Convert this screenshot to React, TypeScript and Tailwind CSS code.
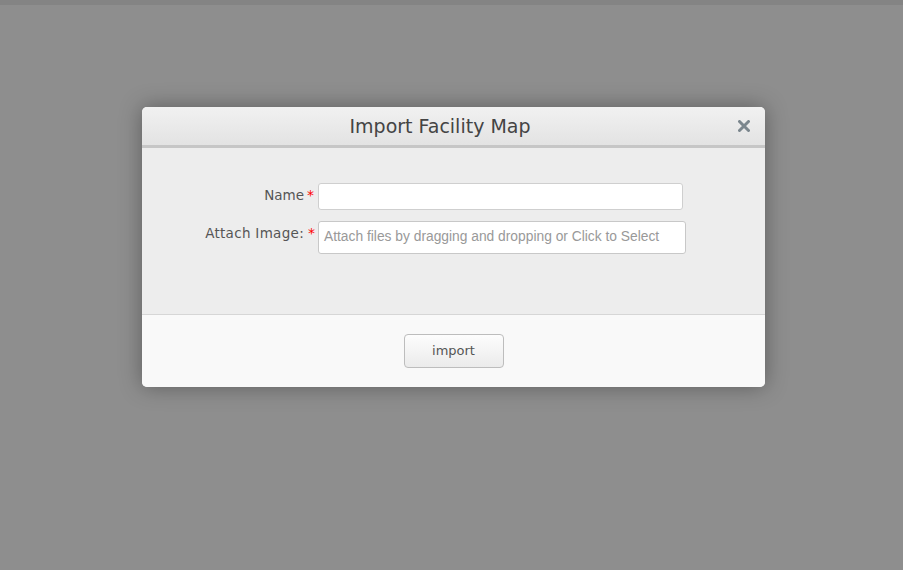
import React from 'react';

const ImportFacilityMap = () => {
  return (
    <div className="min-h-[570px] w-full bg-[#8e8e8e] font-['Liberation_Sans',Arial,sans-serif]">
      <div className="h-[5px] bg-[#848484]" />
      <div className="pl-[142px] pt-[102px]">
        <div className="w-[623px] overflow-hidden rounded-[5px] bg-[#ededed] shadow-[0_0_22px_rgba(0,0,0,0.35)]">
          {/* header */}
          <div className="relative flex h-[41px] items-center justify-center border-b-[3px] border-[#c6c6c6] bg-gradient-to-b from-[#f1f1f1] to-[#e3e3e3] pr-[27px]">
            <h2 className="font-['DejaVu_Sans',Verdana,sans-serif] text-[19px] text-[#444]">Import Facility Map</h2>
            <button className="absolute right-[15px] top-[13px] flex h-[12px] w-[12px] items-center justify-center">
              <svg width="12" height="12" viewBox="0 0 12 12">
                <path d="M1.5 1.5 L10.5 10.5 M10.5 1.5 L1.5 10.5" stroke="#7b868d" strokeWidth="3" strokeLinecap="round" />
              </svg>
            </button>
          </div>

          {/* body */}
          <div className="h-[166px] pt-[35px] font-['DejaVu_Sans',Verdana,sans-serif]">
            <div className="flex items-start">
              <label className="w-[162px] pt-[2px] text-right text-[13.5px] leading-[20px] text-[#555]">Name</label>
              <span className="w-[14px] pl-[3px] pt-[2px] text-[14px] leading-[20px] text-[#f00]">*</span>
              <input
                className="h-[27px] w-[365px] rounded-[3px] border border-[#cfcfcf] bg-white px-[6px] text-[14px] outline-none"
              />
            </div>
            <div className="mt-[11px] flex items-start">
              <label className="w-[162px] pt-[2px] text-right text-[13.5px] leading-[20px] tracking-[0.3px] text-[#555]">Attach Image:</label>
              <span className="w-[14px] pl-[4px] pt-[2px] text-[14px] leading-[20px] text-[#f00]">*</span>
              <div className="flex h-[33px] w-[368px] items-center rounded-[3px] border border-[#c8c8c8] bg-white px-[5px] font-['Liberation_Sans',Arial,sans-serif] text-[13.8px] text-[#999]">
                Attach files by dragging and dropping or Click to Select
              </div>
            </div>
          </div>

          {/* footer */}
          <div className="flex h-[73px] items-center justify-center border-t border-[#d6d6d6] bg-[#f9f9f9]">
            <button className="h-[34px] w-[100px] rounded-[4px] border border-[#bdbdbd] bg-gradient-to-b from-[#fdfdfd] to-[#ebebeb] font-['DejaVu_Sans',Verdana,sans-serif] text-[13px] text-[#555]">
              import
            </button>
          </div>
        </div>
      </div>
    </div>
  );
};

export default function App() {
  return <ImportFacilityMap />;
}
